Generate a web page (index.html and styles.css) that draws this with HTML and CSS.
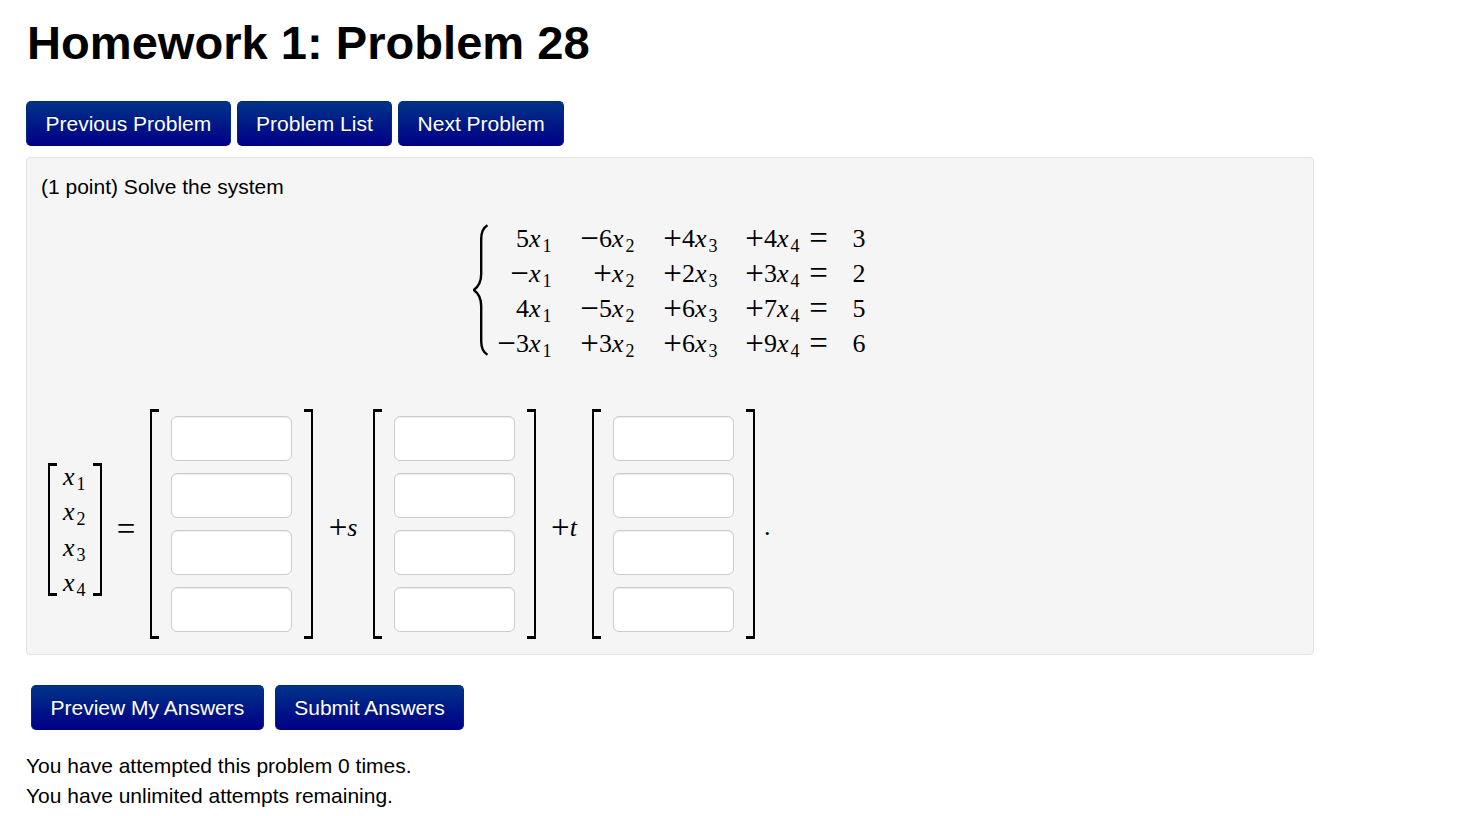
FILE: index.html
```html
<!DOCTYPE html>
<html lang="en">
<head>
    <meta charset="UTF-8">
    <title>Homework 1: Problem 28</title>
    <link rel="stylesheet" href="styles.css">
</head>
<body>
    <h1 class="title">Homework 1: Problem 28</h1>
    <div class="nav">
        <a class="btn" href="#">Previous Problem</a>
        <a class="btn" href="#">Problem List</a>
        <a class="btn" href="#">Next Problem</a>
    </div>
    <div class="problem">
        <div class="intro">(1 point) Solve the system</div>
        <div class="system math">
            <svg class="brace" width="16" height="132" viewBox="0 0 16 132">
                <path d="M14.5 1.2C10.5 3.5 8.2 8 8.2 15V50C8.2 57 5 63 .8 66C5 69 8.2 75 8.2 82V117C8.2 124 10.5 128.5 14.5 130.8" fill="none" stroke="#000" stroke-width="2.4"/>
            </svg>
            <div class="eqs">
                <span>5<i>x</i><sub>1</sub></span><span><span class="o">&minus;</span>6<i>x</i><sub>2</sub></span><span><span class="o">+</span>4<i>x</i><sub>3</sub></span><span><span class="o">+</span>4<i>x</i><sub>4</sub></span><span class="eq"><span class="o">=</span></span><span class="rhs">3</span>
                <span><span class="o">&minus;</span><i>x</i><sub>1</sub></span><span><span class="o">+</span><i>x</i><sub>2</sub></span><span><span class="o">+</span>2<i>x</i><sub>3</sub></span><span><span class="o">+</span>3<i>x</i><sub>4</sub></span><span class="eq"><span class="o">=</span></span><span class="rhs">2</span>
                <span>4<i>x</i><sub>1</sub></span><span><span class="o">&minus;</span>5<i>x</i><sub>2</sub></span><span><span class="o">+</span>6<i>x</i><sub>3</sub></span><span><span class="o">+</span>7<i>x</i><sub>4</sub></span><span class="eq"><span class="o">=</span></span><span class="rhs">5</span>
                <span><span class="o">&minus;</span>3<i>x</i><sub>1</sub></span><span><span class="o">+</span>3<i>x</i><sub>2</sub></span><span><span class="o">+</span>6<i>x</i><sub>3</sub></span><span><span class="o">+</span>9<i>x</i><sub>4</sub></span><span class="eq"><span class="o">=</span></span><span class="rhs">6</span>
            </div>
        </div>
        <div class="answer math">
            <div class="matrix small">
                <div class="br-l"></div>
                <div class="vars">
                    <span><i>x</i><sub>1</sub></span>
                    <span><i>x</i><sub>2</sub></span>
                    <span><i>x</i><sub>3</sub></span>
                    <span><i>x</i><sub>4</sub></span>
                </div>
                <div class="br-r"></div>
            </div>
            <span class="op equals"><span class="o">=</span></span>
            <div class="matrix">
                <div class="br-l"></div>
                <div class="cells">
                    <input class="cell" type="text">
                    <input class="cell" type="text">
                    <input class="cell" type="text">
                    <input class="cell" type="text">
                </div>
                <div class="br-r"></div>
            </div>
            <span class="op plus"><span class="o">+</span><i>s</i></span>
            <div class="matrix">
                <div class="br-l"></div>
                <div class="cells">
                    <input class="cell" type="text">
                    <input class="cell" type="text">
                    <input class="cell" type="text">
                    <input class="cell" type="text">
                </div>
                <div class="br-r"></div>
            </div>
            <span class="op plus plus-t"><span class="o">+</span><i>t</i></span>
            <div class="matrix">
                <div class="br-l"></div>
                <div class="cells">
                    <input class="cell" type="text">
                    <input class="cell" type="text">
                    <input class="cell" type="text">
                    <input class="cell" type="text">
                </div>
                <div class="br-r"></div>
            </div>
            <span class="dot">.</span>
        </div>
    </div>
    <div class="actions">
        <a class="btn" href="#">Preview My Answers</a>
        <a class="btn" href="#">Submit Answers</a>
    </div>
    <div class="status">
        <div>You have attempted this problem 0 times.</div>
        <div>You have unlimited attempts remaining.</div>
    </div>
</body>
</html>
```

FILE: styles.css
```css
body {
    margin: 0;
    padding: 0 0 0 26px;
    height: 816px;
    overflow: hidden;
    box-sizing: border-box;
    background-color: #fff;
    color: #000;
    font-family: "Liberation Sans", Arial, sans-serif;
    font-size: 21px;
    line-height: 30px;
}
.title {
    margin: 0;
    padding: 17px 0 0 1px;
    height: 101px;
    box-sizing: border-box;
    font-size: 47.1px;
    line-height: 52px;
    font-weight: bold;
}
.nav {
    display: flex;
    height: 45px;
}
.nav .btn + .btn {
    margin-left: 5.8px;
}
.btn {
    display: block;
    height: 45px;
    box-sizing: border-box;
    padding: 0 18.5px;
    line-height: 43px;
    color: #fff;
    text-decoration: none;
    font-size: 21px;
    border: 1px solid #002a7a;
    border-bottom-color: #000070;
    border-radius: 5px;
    background-image: linear-gradient(#003388, #000088);
    text-shadow: 0 -1px 0 rgba(0, 0, 0, 0.25);
}
.problem {
    width: 1288px;
    height: 498px;
    margin-top: 11px;
    box-sizing: border-box;
    padding: 14px 14px 0;
    background-color: #f5f5f5;
    border: 1px solid #e3e3e3;
    border-radius: 4px;
}
.math {
    font-family: "Liberation Serif", "Times New Roman", serif;
    font-size: 26px;
    line-height: 30px;
}
.math sub {
    font-size: 18px;
    line-height: 0;
    vertical-align: -5px;
    margin-left: 2px;
}
/* operators are drawn wider in the original math font */
.o {
    font-size: 33px;
    line-height: 0;
    vertical-align: -2px;
}
.system {
    display: flex;
    justify-content: center;
    align-items: center;
    margin-top: 22px;
    height: 134px;
}
.brace {
    margin: 0 7px 2px -2px;
}
.eqs {
    display: grid;
    grid-template-columns: 56px 83px 83px 82px 38px 28px;
    grid-auto-rows: 35.2px;
    margin-top: 6px;
    text-align: right;
    white-space: nowrap;
}
.eqs .eq {
    text-align: center;
}
.answer {
    display: flex;
    align-items: center;
    margin-top: 51px;
    margin-left: 7px;
    height: 230px;
}
.matrix {
    display: flex;
    align-self: stretch;
}
.matrix.small {
    align-self: center;
    height: 133px;
    margin-top: 11px;
}
.br-l,
.br-r {
    width: 7px;
    border: 2px solid #000;
    border-top-width: 3px;
    border-bottom-width: 3px;
}
.br-l {
    border-right: 0;
}
.br-r {
    border-left: 0;
}
.vars {
    display: flex;
    flex-direction: column;
    justify-content: center;
    width: 36px;
    padding: 0 0 0 6px;
    box-sizing: border-box;
    line-height: 35.4px;
}
.cells {
    display: flex;
    flex-direction: column;
    gap: 12px;
    padding: 7px 0 0;
    margin: 0 12px;
}
.cell {
    display: block;
    width: 121px;
    height: 45px;
    box-sizing: border-box;
    margin: 0;
    padding: 0;
    background-color: #fff;
    border: 1px solid #ccc;
    border-radius: 6px;
    box-shadow: inset 0 1px 1px rgba(0, 0, 0, 0.075);
}
.op {
    display: block;
    margin-top: 11px;
}
.equals {
    width: 48px;
    text-align: center;
}
.plus {
    width: 60px;
    margin-top: 8px;
    text-align: center;
}
.plus-t {
    width: 56px;
}
.dot {
    margin: 6px 0 0 9px;
}
.actions {
    display: flex;
    gap: 11px;
    margin: 30px 0 0 5px;
}
.status {
    margin-top: 21px;
}
```
